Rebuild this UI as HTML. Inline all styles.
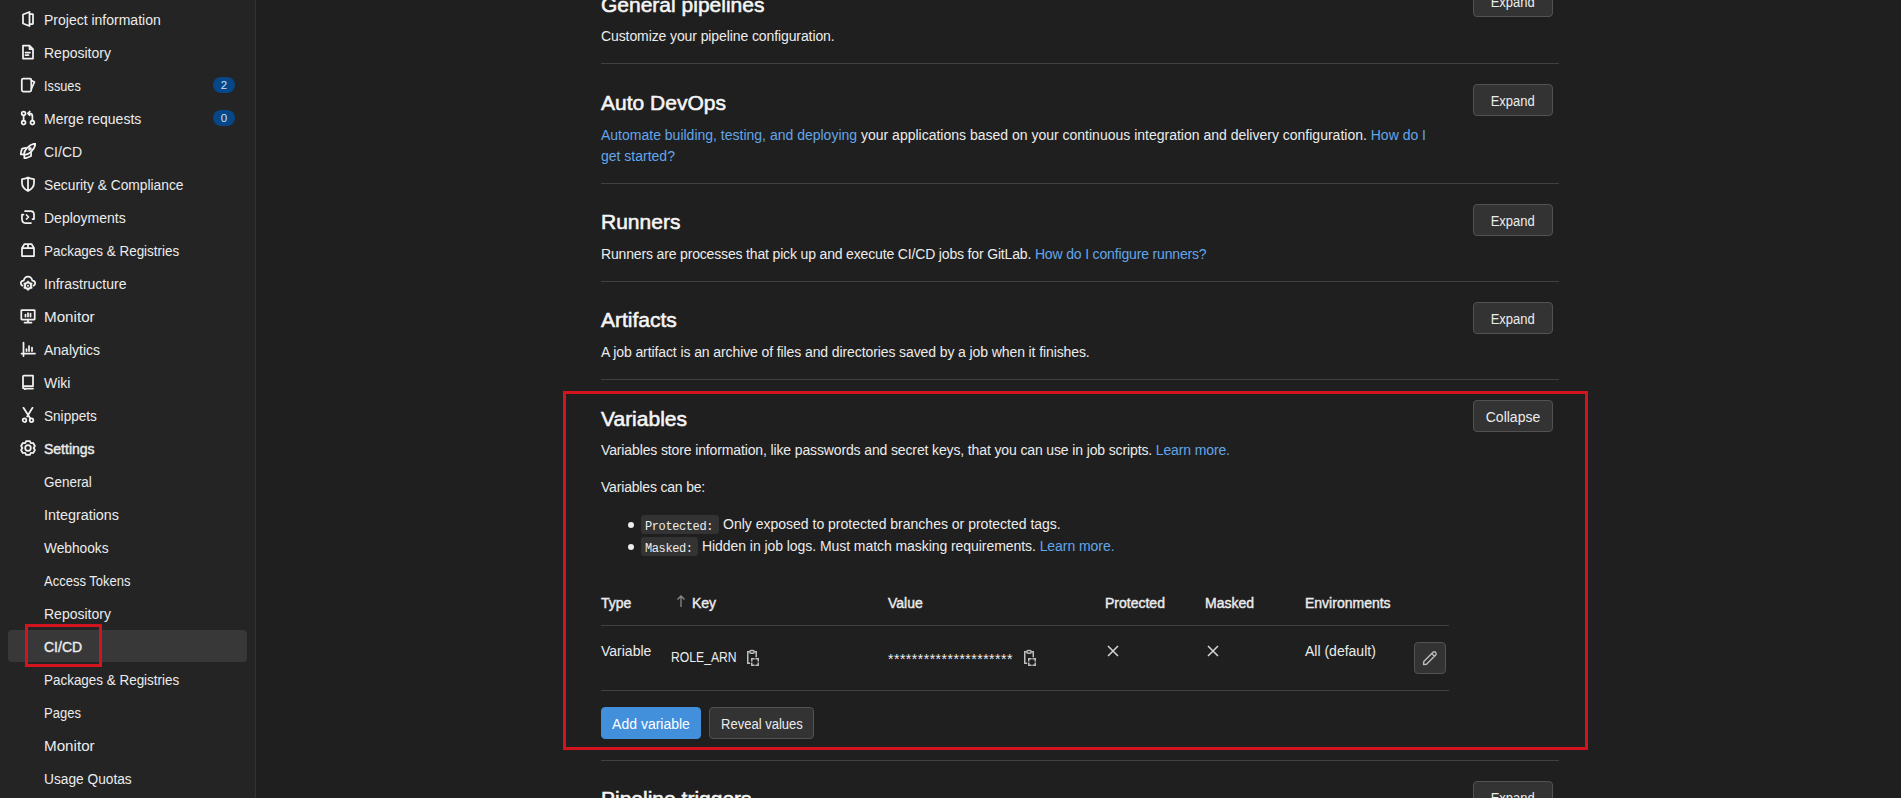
<!DOCTYPE html>
<html><head><meta charset="utf-8"><style>
html,body{margin:0;padding:0}
body{width:1901px;height:798px;overflow:hidden;position:relative;background:#1f1f1f;font-family:"Liberation Sans",sans-serif;font-size:14px;color:#ececec}
.abs{position:absolute}
#sb{position:absolute;left:0;top:0;width:255px;height:798px;background:#242424;border-right:1px solid #333}
.si{position:absolute;left:44px;line-height:20px;white-space:nowrap;color:#ececec}
.ic{position:absolute;left:20px;width:16px;height:16px}
.ic svg{display:block}
.actbg{position:absolute;left:8px;top:630px;width:239px;height:32px;border-radius:4px;background:#383838}
.badge{position:absolute;left:213px;width:22px;height:16px;border-radius:8px;background:#064787;color:#cbe2f9;font-size:11.5px;line-height:17px;text-align:center}
.redbox{position:absolute;border:3px solid #d3141f;box-sizing:border-box}
.h{position:absolute;left:601px;font-size:21px;font-weight:normal;-webkit-text-stroke:0.55px #f5f5f5;line-height:24px;white-space:nowrap;color:#f5f5f5}
.p{position:absolute;left:601px;line-height:20px;white-space:nowrap;letter-spacing:-0.1px}
.sep{position:absolute;left:601px;width:958px;height:1px;background:#404040}
.btn{position:absolute;box-sizing:border-box;height:32px;border:1px solid #525252;background:#333;border-radius:4px;color:#ececec;text-align:center;line-height:32px;white-space:nowrap}
a,.lnk{color:#63a6e9;text-decoration:none}
.th{position:absolute;top:593px;font-weight:normal;-webkit-text-stroke:0.4px #ececec;line-height:20px;white-space:nowrap}
.td{position:absolute;line-height:20px;white-space:nowrap}
.code{position:absolute;font-family:"Liberation Mono",monospace;font-size:12px;letter-spacing:-0.4px;background:#333;border-radius:3px;height:19px;line-height:24px;padding:0 4px;box-sizing:border-box;color:#ececec}
.dot{position:absolute;left:628px;width:6px;height:6px;border-radius:3px;background:#ececec}
</style></head><body>
<div id="sb"></div>
<div class="actbg"></div>
<div class="si" style="top:10px;">Project information</div>
<div class="ic" style="top:11px"><svg width="16" height="16" viewBox="0 0 16 16"><path d="M3 3.5 L9.5 1 L9.5 15 L3 12.5 Z M9.5 3 L12.5 3 Q13 3 13 3.5 L13 12.5 Q13 13 12.5 13 L9.5 13" fill="none" stroke="#f2f2f2" stroke-width="1.75" stroke-linejoin="round" stroke-linecap="round"/></svg></div>
<div class="si" style="top:43px;">Repository</div>
<div class="ic" style="top:44px"><svg width="16" height="16" viewBox="0 0 16 16"><path d="M3 1.5 L9.5 1.5 L13 5 L13 14.5 L3 14.5 Z M9.5 1.5 L9.5 5 L13 5 M5.5 8.5 L10 8.5 M5.5 11 L8.5 11" fill="none" stroke="#f2f2f2" stroke-width="1.75" stroke-linejoin="round" stroke-linecap="round"/></svg></div>
<div class="si" style="top:76px;transform:scaleX(0.91);transform-origin:0 0;">Issues</div>
<div class="ic" style="top:77px"><svg width="16" height="16" viewBox="0 0 16 16"><rect x="1.8" y="1.5" width="9.5" height="13" rx="1.5" fill="none" stroke="#f2f2f2" stroke-width="1.75" stroke-linejoin="round" stroke-linecap="round"/><path d="M11.3 3.5 L14.5 5 L11.3 12" fill="none" stroke="#f2f2f2" stroke-width="1.75" stroke-linejoin="round" stroke-linecap="round"/></svg></div>
<div class="si" style="top:109px;">Merge requests</div>
<div class="ic" style="top:110px"><svg width="16" height="16" viewBox="0 0 16 16"><circle cx="3.6" cy="3.4" r="1.9" fill="none" stroke="#f2f2f2" stroke-width="1.75" stroke-linejoin="round" stroke-linecap="round"/><circle cx="3.6" cy="12.6" r="1.9" fill="none" stroke="#f2f2f2" stroke-width="1.75" stroke-linejoin="round" stroke-linecap="round"/><circle cx="12.4" cy="12.6" r="1.9" fill="none" stroke="#f2f2f2" stroke-width="1.75" stroke-linejoin="round" stroke-linecap="round"/><path d="M3.6 5.3 L3.6 10.7 M12.4 10.7 L12.4 6.2 Q12.4 3.4 9.6 3.4 L8 3.4 M9.8 1.5 L7.9 3.4 L9.8 5.3" fill="none" stroke="#f2f2f2" stroke-width="1.75" stroke-linejoin="round" stroke-linecap="round"/></svg></div>
<div class="si" style="top:142px;">CI/CD</div>
<div class="ic" style="top:143px"><svg width="16" height="16" viewBox="0 0 16 16"><path d="M4 11.9 C3.6 7.5 9.5 0.9 15.4 0.6 C15.1 6.5 8.5 12.4 4 11.9 Z" fill="none" stroke="#f2f2f2" stroke-width="1.75" stroke-linejoin="round" stroke-linecap="round"/><path d="M5.6 4.8 L2.1 5.6 Q1 8.2 0.8 11.4 L3.9 11.4 M11.2 9.8 L11 13.1 Q8 15 4.4 15.3 L4.3 12.1" fill="none" stroke="#f2f2f2" stroke-width="1.75" stroke-linejoin="round" stroke-linecap="round"/><circle cx="10" cy="5.9" r="1.9" fill="#e8e8e8"/></svg></div>
<div class="si" style="top:175px;transform:scaleX(0.985);transform-origin:0 0;">Security &amp; Compliance</div>
<div class="ic" style="top:176px"><svg width="16" height="16" viewBox="0 0 16 16"><path d="M8 1.5 Q11 3 14 3 L14 7 Q14 12 8 15 Q2 12 2 7 L2 3 Q5 3 8 1.5 Z M8 1.5 L8 15" fill="none" stroke="#f2f2f2" stroke-width="1.75" stroke-linejoin="round" stroke-linecap="round"/></svg></div>
<div class="si" style="top:208px;">Deployments</div>
<div class="ic" style="top:209px"><svg width="16" height="16" viewBox="0 0 16 16"><path d="M5 2 L10.5 2 Q14 2 14 5.5 L14 10 L12.5 10 M2 5.5 L2 10 Q2 14 5.5 14 L11 14 M2 5.5 L3.5 5.5 M6.5 6 L8.5 8 L6.5 10" fill="none" stroke="#f2f2f2" stroke-width="1.75" stroke-linejoin="round" stroke-linecap="round"/></svg></div>
<div class="si" style="top:241px;transform:scaleX(0.96);transform-origin:0 0;">Packages &amp; Registries</div>
<div class="ic" style="top:242px"><svg width="16" height="16" viewBox="0 0 16 16"><path d="M2 6 L4.5 2 L11.5 2 L14 6 L14 14 L2 14 Z M2 6 L14 6 M8 2 L8 6" fill="none" stroke="#f2f2f2" stroke-width="1.75" stroke-linejoin="round" stroke-linecap="round"/></svg></div>
<div class="si" style="top:274px;">Infrastructure</div>
<div class="ic" style="top:275px"><svg width="16" height="16" viewBox="0 0 16 16"><path d="M2.3 10.6 Q0.6 9.8 0.9 7.8 Q1.3 5.8 3.6 5.7 Q4.6 1.6 8 1.6 Q11.4 1.6 12.4 5.7 Q14.7 5.8 15.1 7.8 Q15.4 9.8 13.7 10.6" fill="none" stroke="#f2f2f2" stroke-width="1.75" stroke-linejoin="round" stroke-linecap="round"/><path d="M8.00 5.80 L9.85 7.50 L12.24 8.25 L11.70 10.70 L12.24 13.15 L9.85 13.90 L8.00 15.60 L6.15 13.90 L3.76 13.15 L4.30 10.70 L3.76 8.25 L6.15 7.50 Z" fill="#f2f2f2" stroke="#f2f2f2" stroke-width="0.6" stroke-linejoin="round"/><circle cx="8" cy="10.7" r="2.1" fill="#242424"/><circle cx="8" cy="10.7" r="1" fill="#f2f2f2"/></svg></div>
<div class="si" style="top:307px;transform:scaleX(1.085);transform-origin:0 0;">Monitor</div>
<div class="ic" style="top:308px"><svg width="16" height="16" viewBox="0 0 16 16"><rect x="1.3" y="2" width="13.4" height="9.5" rx="0.5" fill="none" stroke="#f2f2f2" stroke-width="1.75" stroke-linejoin="round" stroke-linecap="round"/><path d="M8 11.5 L8 14 M4.5 14.5 L11.5 14.5 M5.5 6.5 L5.5 8.5 M8 5 L8 8.5 M10.5 5.5 L10.5 8.5" fill="none" stroke="#f2f2f2" stroke-width="1.75" stroke-linejoin="round" stroke-linecap="round"/></svg></div>
<div class="si" style="top:340px;">Analytics</div>
<div class="ic" style="top:341px"><svg width="16" height="16" viewBox="0 0 16 16"><path d="M3.5 1.5 L3.5 15 M1.5 12.5 L15 12.5 M6.5 8 L6.5 10 M9 5 L9 10 M12 6.5 L12 10" fill="none" stroke="#f2f2f2" stroke-width="1.75" stroke-linejoin="round" stroke-linecap="round"/></svg></div>
<div class="si" style="top:373px;">Wiki</div>
<div class="ic" style="top:374px"><svg width="16" height="16" viewBox="0 0 16 16"><path d="M3 14 L3 2.5 Q3 1.5 4 1.5 L13 1.5 L13 12 L4.5 12 Q3 12 3 13.5 Q3 14.5 4.5 14.5 L13 14.5 M5 14.5 L5 16" fill="none" stroke="#f2f2f2" stroke-width="1.75" stroke-linejoin="round" stroke-linecap="round"/></svg></div>
<div class="si" style="top:406px;transform:scaleX(0.97);transform-origin:0 0;">Snippets</div>
<div class="ic" style="top:407px"><svg width="16" height="16" viewBox="0 0 16 16"><path d="M3.5 0.8 L10.3 11.5 M12.5 0.8 L7.2 9.5" fill="none" stroke="#f2f2f2" stroke-width="1.75" stroke-linejoin="round" stroke-linecap="round"/><circle cx="4.5" cy="13.2" r="1.8" fill="none" stroke="#f2f2f2" stroke-width="1.75" stroke-linejoin="round" stroke-linecap="round"/><circle cx="11.5" cy="13.2" r="1.8" fill="none" stroke="#f2f2f2" stroke-width="1.75" stroke-linejoin="round" stroke-linecap="round"/></svg></div>
<div class="si" style="top:439px;-webkit-text-stroke:0.4px #ececec;">Settings</div>
<div class="ic" style="top:440px"><svg width="16" height="16" viewBox="0 0 16 16"><path d="M6.26 1.01 L9.74 1.01 L10.80 3.15 L13.18 3.00 L14.92 6.02 L13.60 8.00 L14.92 9.98 L13.18 13.00 L10.80 12.85 L9.74 14.99 L6.26 14.99 L5.20 12.85 L2.82 13.00 L1.08 9.98 L2.40 8.00 L1.08 6.02 L2.82 3.00 L5.20 3.15 Z" fill="none" stroke="#f2f2f2" stroke-width="1.75" stroke-linejoin="round" stroke-linecap="round"/><circle cx="8" cy="8" r="2.8" fill="none" stroke="#f2f2f2" stroke-width="1.75" stroke-linejoin="round" stroke-linecap="round"/></svg></div>
<div class="si" style="top:472px;transform:scaleX(0.96);transform-origin:0 0;">General</div>
<div class="si" style="top:505px;transform:scaleX(1.025);transform-origin:0 0;">Integrations</div>
<div class="si" style="top:538px;transform:scaleX(0.98);transform-origin:0 0;">Webhooks</div>
<div class="si" style="top:571px;transform:scaleX(0.93);transform-origin:0 0;">Access Tokens</div>
<div class="si" style="top:604px;">Repository</div>
<div class="si act" style="top:637px;-webkit-text-stroke:0.4px #ececec;">CI/CD</div>
<div class="si" style="top:670px;transform:scaleX(0.96);transform-origin:0 0;">Packages &amp; Registries</div>
<div class="si" style="top:703px;transform:scaleX(0.93);transform-origin:0 0;">Pages</div>
<div class="si" style="top:736px;transform:scaleX(1.085);transform-origin:0 0;">Monitor</div>
<div class="si" style="top:769px;transform:scaleX(0.98);transform-origin:0 0;">Usage Quotas</div>
<div class="badge" style="top:77px">2</div>
<div class="badge" style="top:110px">0</div>
<div class="redbox" style="left:25px;top:624px;width:77px;height:43px"></div>

<!-- General pipelines -->
<div class="h" style="top:-7px">General pipelines</div>
<div class="p" style="top:26px">Customize your pipeline configuration.</div>
<div class="btn" style="left:1473px;top:-15px;width:80px"><span style="display:inline-block;transform:scaleX(0.93)">Expand</span></div>
<div class="sep" style="top:63px"></div>

<!-- Auto DevOps -->
<div class="h" style="top:91px">Auto DevOps</div>
<div class="p" style="top:125px;line-height:21px;letter-spacing:0"><span class="lnk">Automate building, testing, and deploying</span> your applications based on your continuous integration and delivery configuration. <span class="lnk">How do I<br>get started?</span></div>
<div class="btn" style="left:1473px;top:84px;width:80px"><span style="display:inline-block;transform:scaleX(0.93)">Expand</span></div>
<div class="sep" style="top:183px"></div>

<!-- Runners -->
<div class="h" style="top:210px">Runners</div>
<div class="p" style="top:244px;letter-spacing:-0.16px">Runners are processes that pick up and execute CI/CD jobs for GitLab. <span class="lnk">How do I configure runners?</span></div>
<div class="btn" style="left:1473px;top:204px;width:80px"><span style="display:inline-block;transform:scaleX(0.93)">Expand</span></div>
<div class="sep" style="top:281px"></div>

<!-- Artifacts -->
<div class="h" style="top:308px">Artifacts</div>
<div class="p" style="top:342px">A job artifact is an archive of files and directories saved by a job when it finishes.</div>
<div class="btn" style="left:1473px;top:302px;width:80px"><span style="display:inline-block;transform:scaleX(0.93)">Expand</span></div>
<div class="sep" style="top:379px"></div>

<!-- Variables -->
<div class="h" style="top:407px">Variables</div>
<div class="p" style="top:440px;letter-spacing:-0.13px">Variables store information, like passwords and secret keys, that you can use in job scripts. <span class="lnk">Learn more.</span></div>
<div class="btn" style="left:1473px;top:400px;width:80px">Collapse</div>
<div class="p" style="top:477px;letter-spacing:-0.18px">Variables can be:</div>
<div class="dot" style="top:522px"></div>
<div class="code" style="left:641px;top:515px;width:78px">Protected:</div>
<div class="p" style="left:723px;top:514px;letter-spacing:0">Only exposed to protected branches or protected tags.</div>
<div class="dot" style="top:544px"></div>
<div class="code" style="left:641px;top:537px;width:57px">Masked:</div>
<div class="p" style="left:702px;top:536px;letter-spacing:-0.06px">Hidden in job logs. Must match masking requirements. <span class="lnk">Learn more.</span></div>

<div class="th" style="left:601px">Type</div>
<svg class="abs" style="left:676px;top:594px" width="10" height="14" viewBox="0 0 10 14"><path d="M5 13 L5 2 M1.5 5.5 L5 2 L8.5 5.5" fill="none" stroke="#8a8a8a" stroke-width="1.3"/></svg>
<div class="th" style="left:692px">Key</div>
<div class="th" style="left:888px">Value</div>
<div class="th" style="left:1105px">Protected</div>
<div class="th" style="left:1205px">Masked</div>
<div class="th" style="left:1305px">Environments</div>
<div class="abs" style="left:601px;top:625px;width:848px;height:1px;background:#404040"></div>
<div class="td" style="left:601px;top:641px">Variable</div>
<div class="td" style="left:671px;top:647px;transform:scaleX(0.87);transform-origin:0 0">ROLE_ARN</div>
<div class="td" style="left:888px;top:649px;letter-spacing:0.5px">*********************</div>
<svg class="abs" style="left:745px;top:649px" width="18" height="18" viewBox="0 0 18 18"><g fill="none" stroke="#bdbdbd" stroke-width="1.5"><path d="M4.6 2.75 H2.75 V14.25 H5.2"/><path d="M9.4 2.75 H11.25 V8.2"/><rect x="4.8" y="1.6" width="4.4" height="2.6" rx="1.3"/><path d="M6.75 12.6 V9.75 H9.6 M10.4 9.75 H13.25 V12.6 M13.25 13.4 V16.25 H10.4 M9.6 16.25 H6.75 V13.4"/></g></svg>
<svg class="abs" style="left:1022px;top:649px" width="18" height="18" viewBox="0 0 18 18"><g fill="none" stroke="#bdbdbd" stroke-width="1.5"><path d="M4.6 2.75 H2.75 V14.25 H5.2"/><path d="M9.4 2.75 H11.25 V8.2"/><rect x="4.8" y="1.6" width="4.4" height="2.6" rx="1.3"/><path d="M6.75 12.6 V9.75 H9.6 M10.4 9.75 H13.25 V12.6 M13.25 13.4 V16.25 H10.4 M9.6 16.25 H6.75 V13.4"/></g></svg>
<svg class="abs" style="left:1106px;top:644px" width="14" height="14" viewBox="0 0 14 14"><path d="M2 2 L12 12 M12 2 L2 12" stroke="#d6d6d6" stroke-width="1.5" fill="none"/></svg>
<svg class="abs" style="left:1206px;top:644px" width="14" height="14" viewBox="0 0 14 14"><path d="M2 2 L12 12 M12 2 L2 12" stroke="#d6d6d6" stroke-width="1.5" fill="none"/></svg>
<div class="td" style="left:1305px;top:641px">All (default)</div>
<div class="abs" style="left:601px;top:690px;width:848px;height:1px;background:#404040"></div>
<div class="btn" style="left:1414px;top:642px;width:32px"></div>
<svg class="abs" style="left:1422px;top:650px" width="16" height="16" viewBox="0 0 16 16"><g fill="none" stroke="#bdbdbd" stroke-width="1.4" stroke-linejoin="round"><path d="M1.5 14.5 L1.8 11.5 L11 2.3 Q12.3 1.2 13.6 2.4 Q14.8 3.7 13.7 5 L4.5 14.2 Z M9.8 3.6 L12.4 6.2"/></g></svg>
<div class="btn" style="left:601px;top:707px;width:100px;background:#428fdc;border-color:#428fdc;color:#fff">Add variable</div>
<div class="btn" style="left:709px;top:707px;width:105px"><span style="display:inline-block;transform:scaleX(0.93)">Reveal values</span></div>
<div class="redbox" style="left:563px;top:391px;width:1025px;height:359px"></div>

<div class="sep" style="top:760px"></div>
<div class="h" style="top:787px">Pipeline triggers</div>
<div class="btn" style="left:1473px;top:781px;width:80px"><span style="display:inline-block;transform:scaleX(0.93)">Expand</span></div>
</body></html>
